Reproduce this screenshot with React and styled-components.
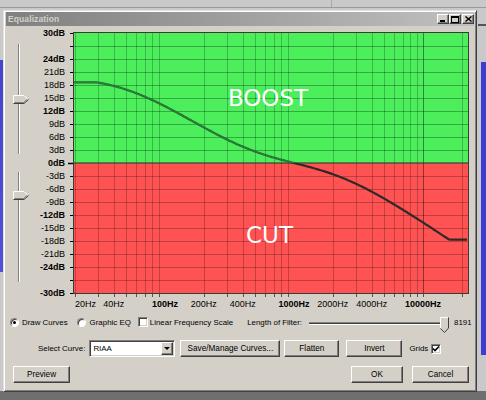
import React from "react";
import styled, { createGlobalStyle, css } from "styled-components";

const GlobalStyle = createGlobalStyle`
  html, body { margin: 0; padding: 0; }
  body {
    width: 486px;
    height: 400px;
    overflow: hidden;
    font-family: "Liberation Sans", Arial, sans-serif;
  }
`;

const raised = css`
  background: #d4d0c8;
  border: 1px solid;
  border-color: #fff #404040 #404040 #fff;
  box-shadow: inset -1px -1px #808080;
`;

const sunken = css`
  border: 1px solid;
  border-color: #808080 #fff #fff #808080;
  box-shadow: inset 1px 1px #404040, inset -1px -1px #d4d0c8;
`;

const Desktop = styled.div`
  width: 486px;
  height: 400px;
  box-sizing: border-box;
  padding: 10px 0 0 3px;
  background:
    linear-gradient(#6f6f6f, #6f6f6f) left bottom / 100% 9px no-repeat,
    linear-gradient(#555, #555) right 24px / 8px 2px no-repeat,
    linear-gradient(to bottom, transparent 62px, #3c3cd2 62px, #3c3cd2 355px, transparent 355px) right top / 5px 100% no-repeat,
    linear-gradient(to bottom, transparent 60px, #4444cc 60px, #5050d8 272px, transparent 272px) left top / 3px 100% no-repeat,
    linear-gradient(#9a9a9a, #9a9a9a) left 7px / 100% 1px no-repeat,
    linear-gradient(#a8a8a8, #a8a8a8) 331px 0 / 1px 7px no-repeat,
    #c9c9c9;
`;

const Dialog = styled.div`
  width: 474px;
  height: 382px;
  box-sizing: border-box;
  padding: 1px 2px 8px 2px;
  background: #d4d0c8;
  border: 1px solid;
  border-color: #e4e2dc #404040 #404040 #e4e2dc;
  box-shadow: inset 1px 1px #fff, inset -1px -1px #808080;
  display: flex;
  flex-direction: column;
`;

const TitleBar = styled.div`
  height: 14px;
  display: flex;
  align-items: center;
  padding: 0 0 0 2px;
  background: linear-gradient(to right, #808080, #c0c0c0);
`;

const Title = styled.span`
  flex: 1;
  font-size: 8.5px;
  font-weight: bold;
  color: #d4d0c8;
  letter-spacing: 0.1px;
`;

const CaptionButton = styled.div`
  ${raised};
  width: 12px;
  height: 10px;
  box-sizing: border-box;
  margin-left: ${(p) => p.$gap || 0}px;
  display: flex;
  align-items: center;
  justify-content: center;
`;

const ChartRow = styled.div`
  margin-top: 2px;
  height: 284px;
  display: flex;
`;

const SliderColumn = styled.div`
  width: 26px;
  padding-top: 16px;
  display: flex;
  flex-direction: column;
  gap: 18px;
`;

const VSlider = styled.div`
  position: relative;
  width: 26px;
  height: 110px;
`;

const VGroove = styled.div`
  width: 2px;
  height: 100%;
  margin-left: 12px;
  border-left: 1px solid #808080;
  border-right: 1px solid #fff;
  background: #404040;
  box-sizing: border-box;
`;

const VThumb = styled.svg`
  position: absolute;
  left: 7px;
  top: ${(p) => p.$top}px;
`;

const Row = styled.div`
  display: flex;
  align-items: center;
  height: ${(p) => p.$h}px;
  margin-top: ${(p) => p.$mt || 0}px;
  padding-left: ${(p) => p.$pl || 0}px;
  padding-right: ${(p) => p.$pr || 0}px;
  font-size: 7.9px;
  color: #000;
`;

const Text = styled.span`
  margin-left: ${(p) => p.$ml || 0}px;
  white-space: nowrap;
`;

const Radio = styled.span`
  width: 9px;
  height: 9px;
  box-sizing: border-box;
  border-radius: 50%;
  margin-left: ${(p) => p.$ml || 0}px;
  background: #fff;
  border: 1px solid;
  border-color: #808080 #fff #fff #808080;
  box-shadow: inset 1px 1px #404040;
  display: flex;
  align-items: center;
  justify-content: center;
  &::after {
    content: "";
    width: 3px;
    height: 3px;
    border-radius: 50%;
    background: ${(p) => (p.$on ? "#000" : "transparent")};
  }
`;

const Check = styled.span`
  ${sunken};
  width: 10px;
  height: 10px;
  box-sizing: border-box;
  background: #fff;
  margin-left: ${(p) => p.$ml || 0}px;
  display: flex;
  align-items: center;
  justify-content: center;
`;

const HSlider = styled.div`
  position: relative;
  width: 138px;
  height: 20px;
  margin-left: ${(p) => p.$ml || 0}px;
`;

const HGroove = styled.div`
  position: absolute;
  left: 0;
  right: 0;
  top: 10px;
  height: 3px;
  box-sizing: border-box;
  border-top: 1px solid #808080;
  border-bottom: 1px solid #fff;
  background: #404040;
`;

const HThumb = styled.svg`
  position: absolute;
  left: 131px;
  top: 5px;
`;

const Combo = styled.div`
  ${sunken};
  width: 86px;
  height: 17px;
  box-sizing: border-box;
  margin-left: ${(p) => p.$ml || 0}px;
  background: #fff;
  display: flex;
  align-items: center;
  padding: 0 1px 0 3px;
`;

const ComboText = styled.span`
  flex: 1;
`;

const ComboArrow = styled.div`
  ${raised};
  width: 12px;
  height: 13px;
  box-sizing: border-box;
  display: flex;
  align-items: center;
  justify-content: center;
  &::after {
    content: "";
    border-left: 3px solid transparent;
    border-right: 3px solid transparent;
    border-top: 3px solid #000;
  }
`;

const Button = styled.button`
  ${raised};
  width: ${(p) => p.$w}px;
  height: 17px;
  box-sizing: border-box;
  margin-left: ${(p) => p.$ml || 0}px;
  padding: 0;
  font-family: "Liberation Sans", Arial, sans-serif;
  font-size: 8.2px;
  color: #000;
`;

const Spacer = styled.div`
  flex: 1;
`;

/* chart geometry in page pixels */
const X0 = 73;
const X1 = 469;
const YT = 32;
const YB = 294;
const Y0 = 163;
const PX_DB = 130 / 30;
const fx = (f) => 165 + 129 * Math.log10(f / 100);
const dy = (db) => Y0 - db * PX_DB;

function riaa(f) {
  const mag = (fr) => {
    const w = 2 * Math.PI * fr;
    const t1 = 3180e-6, t2 = 318e-6, t3 = 75e-6;
    const m = Math.sqrt(1 + (w * t2) ** 2) /
      (Math.sqrt(1 + (w * t1) ** 2) * Math.sqrt(1 + (w * t3) ** 2));
    return 20 * Math.log10(m);
  };
  return mag(f) - mag(1000);
}

const freqs = [];
for (const dec of [10, 100, 1000]) for (let i = 2; i <= 9; i++) freqs.push(dec * i);
freqs.splice(0, 0);
freqs.push(10000, 20000);
const gridFreqs = freqs.filter((f) => f >= 20);
const decades = [100, 1000, 10000];

const dbLabels = [30, 24, 21, 18, 15, 12, 9, 6, 3, 0, -3, -6, -9, -12, -15, -18, -21, -24, -30];
const boldDb = [30, 24, 12, 0, -12, -24, -30];

const hzLabels = [
  { f: 20, t: "20Hz", start: true },
  { f: 40, t: "40Hz" },
  { f: 100, t: "100Hz", b: true },
  { f: 200, t: "200Hz" },
  { f: 400, t: "400Hz" },
  { f: 1000, t: "1000Hz", b: true },
  { f: 2000, t: "2000Hz" },
  { f: 4000, t: "4000Hz" },
  { f: 10000, t: "10000Hz", b: true },
];

function curvePath() {
  const pts = [];
  for (let x = X0 + 1; x <= X1 - 1; x += 1.5) {
    const f = Math.pow(10, (x - 165) / 129 + 2);
    const db = riaa(Math.min(Math.max(f, 30), 16000));
    pts.push(`${x.toFixed(1)},${dy(db).toFixed(1)}`);
  }
  return "M" + pts.join(" L");
}

function Chart() {
  const d = curvePath();
  const hLines = [];
  for (let db = -27; db <= 27; db += 3) if (db !== 0) hLines.push(db);
  const ticks = [];
  for (let db = -30; db <= 30; db += 3) ticks.push(db);
  return (
    <svg width="440" height="284" viewBox="32 28 440 284" style={{ display: "block" }}>
      <defs>
        <clipPath id="boostClip"><rect x={X0} y={YT} width={X1 - X0} height={Y0 - YT} /></clipPath>
        <clipPath id="cutClip"><rect x={X0} y={Y0} width={X1 - X0} height={YB - Y0} /></clipPath>
      </defs>
      <rect x={X0} y={YT} width={X1 - X0} height={Y0 - YT} fill="#4cee5c" />
      <rect x={X0} y={Y0} width={X1 - X0} height={YB - Y0} fill="#ff5252" />
      {hLines.map((db) => (
        <line key={db} x1={X0} x2={X1} y1={dy(db) + 0.5} y2={dy(db) + 0.5}
          stroke={db > 0 ? "#2f9e3e" : "#b83a3a"} strokeWidth="1" opacity="0.85" />
      ))}
      {gridFreqs.map((f) => (
        <line key={f} x1={Math.round(fx(f)) + 0.5} x2={Math.round(fx(f)) + 0.5} y1={YT} y2={YB}
          stroke="#000" strokeOpacity={decades.includes(f) ? 0.42 : 0.22} strokeWidth="1" />
      ))}
      <line x1={X0} x2={X1} y1={Y0} y2={Y0} stroke="#2a2a2a" strokeWidth="1.2" />
      <text x="268" y="106" textAnchor="middle" fill="#fff" fontFamily="'DejaVu Sans', sans-serif" fontSize="23">BOOST</text>
      <text x="269.5" y="243" textAnchor="middle" fill="#fff" fontFamily="'DejaVu Sans', sans-serif" fontSize="23">CUT</text>
      <path d={d} fill="none" stroke="#1e6a2c" strokeWidth="2.2" clipPath="url(#boostClip)" />
      <path d={d} fill="none" stroke="#5f9f6a" strokeWidth="0.6" opacity="0.6" clipPath="url(#boostClip)" />
      <path d={d} fill="none" stroke="#2f2a28" strokeWidth="2.2" clipPath="url(#cutClip)" />
      <rect x={X0 + 0.5} y={YT + 0.5} width={X1 - X0 - 1} height={YB - YT - 1} fill="none" stroke="#3a3a3a" strokeWidth="1" />
      {ticks.map((db) => (
        <line key={db} x1={db === 0 ? 68 : 70} x2={X0} y1={dy(db) + 0.5} y2={dy(db) + 0.5}
          stroke="#000" strokeWidth={db === 0 ? 1.5 : 1} />
      ))}
      {gridFreqs.map((f) => (
        <line key={"t" + f} x1={Math.round(fx(f)) + 0.5} x2={Math.round(fx(f)) + 0.5} y1={YB} y2={YB + 3}
          stroke="#555" strokeWidth="1" />
      ))}
      <g fontFamily="'Liberation Sans', Arial, sans-serif" fontSize="9" fill="#000">
        {dbLabels.map((db) => (
          <text key={db} x="65" y={dy(db) + 3.3} textAnchor="end" fontWeight={boldDb.includes(db) ? "bold" : "normal"}>
            {db}dB
          </text>
        ))}
        {hzLabels.map((h) => (
          <text key={h.t} x={h.start ? 75 : fx(h.f)} y="306.5" textAnchor={h.start ? "start" : "middle"}
            fontWeight={h.b ? "bold" : "normal"}>
            {h.t}
          </text>
        ))}
      </g>
    </svg>
  );
}

function VThumbShape({ top }) {
  return (
    <VThumb $top={top} width="16" height="9" viewBox="0 0 16 9">
      <polygon points="0.5,0.5 11,0.5 15.5,4.5 11,8.5 0.5,8.5" fill="#d4d0c8" />
      <polyline points="0.5,8 0.5,0.5 11,0.5 14.5,4" fill="none" stroke="#fff" />
      <polyline points="0.5,8.5 11,8.5 15.5,4.5" fill="none" stroke="#404040" />
      <polyline points="1.5,7.5 10.6,7.5 14,4.5" fill="none" stroke="#808080" />
    </VThumb>
  );
}

function Tick() {
  return (
    <svg width="8" height="8" viewBox="0 0 8 8">
      <polyline points="1,3.5 3,5.5 7,1.5" fill="none" stroke="#000" strokeWidth="1.6" />
    </svg>
  );
}

export default function App() {
  return (
    <>
      <GlobalStyle />
      <Desktop>
        <Dialog>
          <TitleBar>
            <Title>Equalization</Title>
            <CaptionButton>
              <svg width="6" height="6" viewBox="0 0 6 6"><rect x="0" y="4" width="5" height="2" fill="#000" /></svg>
            </CaptionButton>
            <CaptionButton>
              <svg width="8" height="7" viewBox="0 0 8 7"><rect x="0.5" y="0.5" width="7" height="6" fill="none" stroke="#000" /><rect x="0" y="0" width="8" height="2" fill="#000" /></svg>
            </CaptionButton>
            <CaptionButton $gap={1}>
              <svg width="7" height="6" viewBox="0 0 7 6"><path d="M0.5 0.5 L6.5 5.5 M6.5 0.5 L0.5 5.5" stroke="#000" strokeWidth="1.4" /></svg>
            </CaptionButton>
          </TitleBar>

          <ChartRow>
            <SliderColumn>
              <VSlider>
                <VGroove />
                <VThumbShape top={51} />
              </VSlider>
              <VSlider>
                <VGroove />
                <VThumbShape top={19} />
              </VSlider>
            </SliderColumn>
            <Chart />
          </ChartRow>

          <Row $h={20} $pl={4}>
            <Radio $on />
            <Text $ml={3}>Draw Curves</Text>
            <Radio $ml={9} />
            <Text $ml={4}>Graphic EQ</Text>
            <Check $ml={7} />
            <Text $ml={2}>Linear Frequency Scale</Text>
            <Text $ml={14}>Length of Filter:</Text>
            <HSlider $ml={7}>
              <HGroove />
              <HThumb width="9" height="16" viewBox="0 0 9 16">
                <polygon points="0.5,0.5 8.5,0.5 8.5,11 4.5,15.5 0.5,11" fill="#d4d0c8" />
                <polyline points="0.5,11 0.5,0.5 8,0.5" fill="none" stroke="#fff" />
                <polyline points="8.5,0.5 8.5,11 4.5,15.5 0.5,11.5" fill="none" stroke="#404040" />
              </HThumb>
            </HSlider>
            <Text $ml={7}>8191</Text>
          </Row>

          <Row $h={17} $mt={8} $pl={32}>
            <Text>Select Curve:</Text>
            <Combo $ml={4}>
              <ComboText>RIAA</ComboText>
              <ComboArrow />
            </Combo>
            <Button $w={100} $ml={5}>Save/Manage Curves...</Button>
            <Button $w={55} $ml={4}>Flatten</Button>
            <Button $w={56} $ml={7}>Invert</Button>
            <Text $ml={7}>Grids</Text>
            <Check $ml={3}><Tick /></Check>
          </Row>

          <Row $h={17} $mt={9} $pl={7} $pr={5}>
            <Button $w={57}>Preview</Button>
            <Spacer />
            <Button $w={52}>OK</Button>
            <Button $w={57} $ml={9}>Cancel</Button>
          </Row>
        </Dialog>
      </Desktop>
    </>
  );
}
